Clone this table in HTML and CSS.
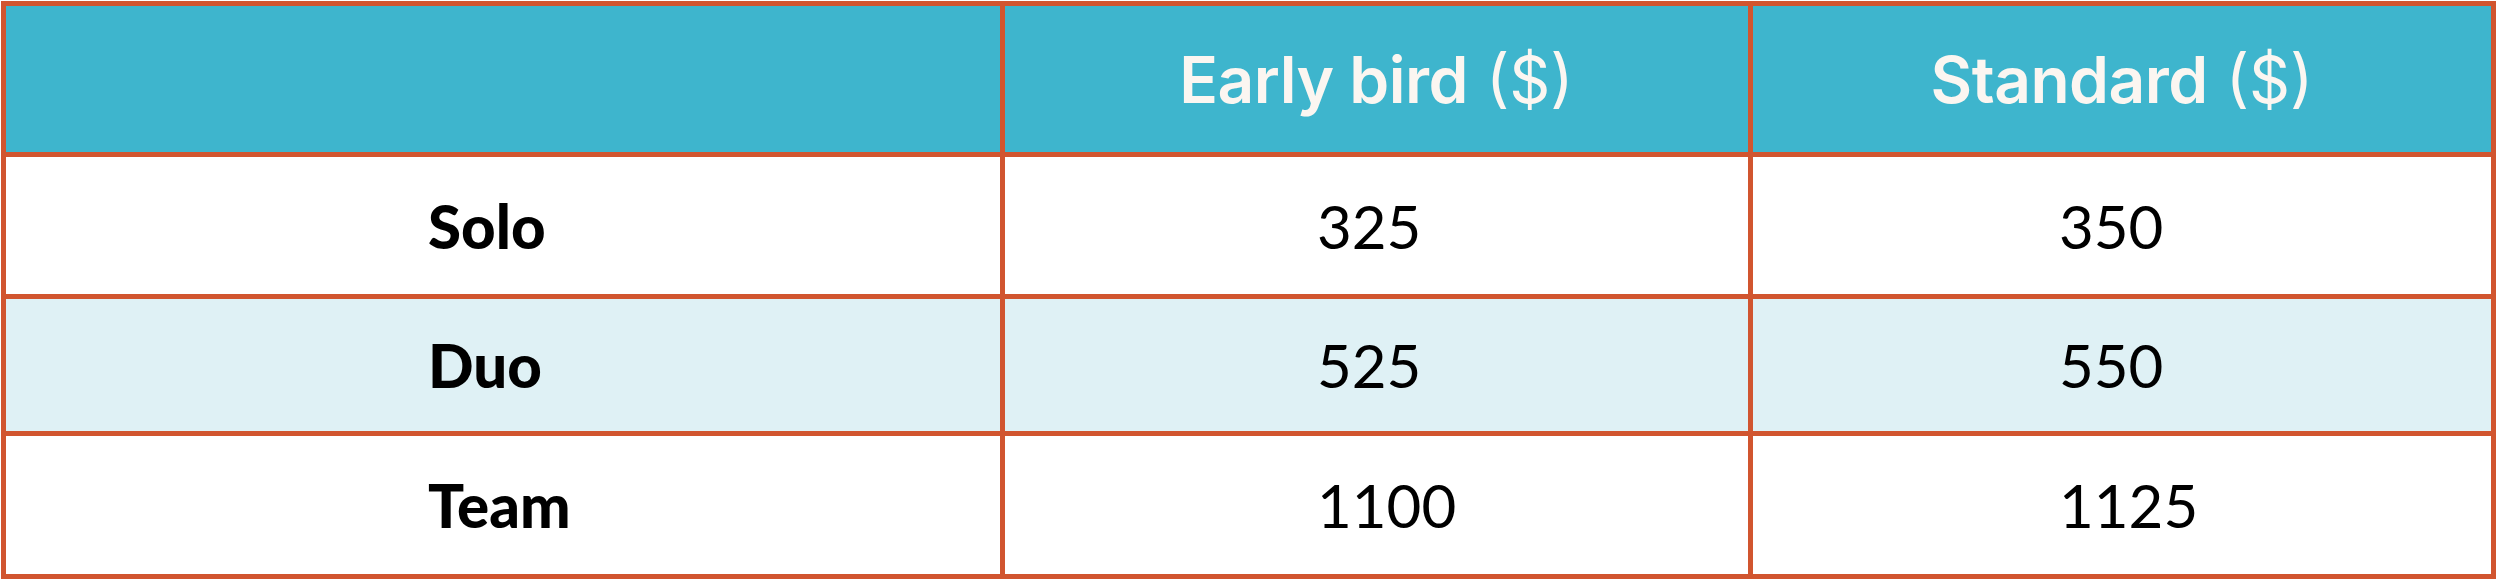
FILE: index.html
```html
<!DOCTYPE html>
<html lang="en">
<head>
<meta charset="utf-8">
<title>Pricing table</title>
<link rel="stylesheet" href="styles.css">
</head>
<body>
<div class="table">
  <div class="cell head"></div>
  <div class="cell head"><span class="h-strong">Early bird</span><span class="h-light">($)</span></div>
  <div class="cell head"><span class="h-strong">Standard</span><span class="h-light">($)</span></div>

  <div class="cell label r1">Solo</div>
  <div class="cell num c2 r1">325</div>
  <div class="cell num c3 r1">350</div>

  <div class="cell label alt r2">Duo</div>
  <div class="cell num c2 alt r2">525</div>
  <div class="cell num c3 alt r2">550</div>

  <div class="cell label r3">Team</div>
  <div class="cell num c2 r3">1100</div>
  <div class="cell num c3 r3">1125</div>
</div>
</body>
</html>
```
FILE: styles.css
```css
html, body {
  margin: 0;
  padding: 0;
  background: #ffffff;
}

.table {
  margin: 1px 0 0 1px;
  width: 2495px;
  display: grid;
  grid-template-columns: 994px 743px 738px;
  grid-template-rows: 146px 137px 132px 138px;
  gap: 5px;
  padding: 5px;
  box-sizing: border-box;
  background: #d1552f;
}

.cell {
  background: #ffffff;
  display: flex;
  align-items: center;
  color: #000000;
}

.cell.alt {
  background: #dff1f5;
}

.head {
  background: #3eb5cd;
  justify-content: center;
  color: #fbf6f1;
  font-family: Inter, "Liberation Sans", sans-serif;
  font-size: 64px;
  gap: 18px;
}

.h-strong {
  font-weight: 600;
  letter-spacing: -0.5px;
}

.h-light {
  font-weight: 400;
}

.label {
  font-family: Lato, "Liberation Sans", sans-serif;
  font-weight: 900;
  font-size: 60px;
  padding-left: 422px;
}

.num {
  font-family: Lato, "Liberation Sans", sans-serif;
  font-weight: 400;
  font-size: 60px;
}

.c2 {
  padding-left: 312px;
}

.c3 {
  padding-left: 306px;
}
```
